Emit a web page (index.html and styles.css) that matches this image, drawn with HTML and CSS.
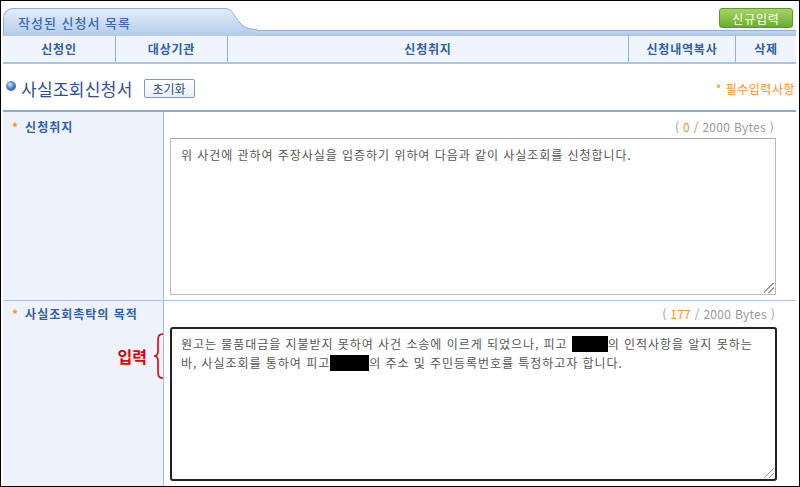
FILE: index.html
```html
<!DOCTYPE html>
<html lang="ko">
<head>
    <meta charset="UTF-8">
    <title>사실조회신청서</title>
    <link rel="stylesheet" href="styles.css">
</head>
<body>
    <div class="frame">
        <!-- 상단 탭 -->
        <div class="topbar">
            <div class="tab">작성된 신청서 목록</div>
            <svg class="tab-curve" width="36" height="28" viewBox="0 0 36 28">
                <defs>
                    <linearGradient id="tabg" x1="0" y1="0" x2="0" y2="1">
                        <stop offset="0" stop-color="#e3edf9"/>
                        <stop offset="1" stop-color="#b3cbea"/>
                    </linearGradient>
                </defs>
                <path d="M0 0.5 H4 C12 0.5 13 9 19 15 C23 19 27 21.5 36 21.5 V28 H0 Z" fill="url(#tabg)"/>
                <path d="M0 0.5 H4 C12 0.5 13 9 19 15 C23 19 27 21.5 36 21.5" fill="none" stroke="#8daedb" stroke-width="1"/>
            </svg>
            <div class="tab-rest">
                <button class="btn-new">신규입력</button>
                <div class="tab-line"></div>
            </div>
        </div>

        <div class="cols">
            <div>신청인</div>
            <div>대상기관</div>
            <div>신청취지</div>
            <div>신청내역복사</div>
            <div>삭제</div>
        </div>

        <!-- 신청서 제목 -->
        <div class="title-row">
            <span class="bullet"></span>
            <h2>사실조회신청서</h2>
            <button class="btn-reset">초기화</button>
            <span class="required">* 필수입력사항</span>
        </div>

        <div class="form">
            <div class="form-row first">
                <div class="label"><span class="star">*</span>신청취지</div>
                <div class="field">
                    <div class="bytes">( <em>0</em> / 2000 Bytes )</div>
                    <div class="textbox">위 사건에 관하여 주장사실을 입증하기 위하여 다음과 같이 사실조회를 신청합니다.</div>
                </div>
            </div>
            <div class="form-row second">
                <div class="label">
                    <div><span class="star">*</span>사실조회촉탁의 목적</div>
                    <div class="note">
                        <span class="note-text">입력</span>
                        <svg class="brace" width="12" height="46" viewBox="0 0 12 46">
                            <path d="M10 1 C5 1 5 4 5 9 V18 C5 21 4 23 1 23 C4 23 5 25 5 28 V37 C5 42 5 45 10 45" fill="none" stroke="#e00000" stroke-width="1.6"/>
                        </svg>
                    </div>
                </div>
                <div class="field">
                    <div class="bytes">( <em>177</em> / 2000 Bytes )</div>
                    <div class="textbox active">원고는 물품대금을 지불받지 못하여 사건 소송에 이르게 되었으나, 피고 <span class="hide w1"></span>의 인적사항을 알지 못하는<br>바, 사실조회를 통하여 피고<span class="hide w2"></span>의 주소 및 주민등록번호를 특정하고자 합니다.</div>
                </div>
            </div>
        </div>
    </div>
</body>
</html>
```

FILE: styles.css
```css
* {
    margin: 0;
    padding: 0;
    box-sizing: border-box;
}

body {
    font-family: "Noto Sans CJK KR", "Noto Sans", sans-serif;
    font-size: 12px;
    color: #555;
    background: #fff;
}

.frame {
    width: 800px;
    height: 487px;
    border: 1px solid #000;
    padding: 0 3px 0 2px;
    display: flex;
    flex-direction: column;
    overflow: hidden;
}

/* 상단 탭 */
.topbar {
    display: flex;
    height: 35px;
    align-items: flex-end;
}

.tab {
    width: 218px;
    height: 28px;
    padding: 0 0 0 14px;
    line-height: 28px;
    color: #3b67b3;
    font-size: 13px;
    font-weight: 500;
    letter-spacing: 1px;
    background: linear-gradient(#e3edf9, #b3cbea);
    border: 1px solid #8daedb;
    border-right: none;
    border-bottom: none;
    border-radius: 10px 0 0 0;
}

.tab-curve {
    display: block;
    flex-shrink: 0;
}

.tab-rest {
    flex: 1;
    height: 35px;
    display: flex;
    flex-direction: column;
    justify-content: space-between;
    align-items: flex-end;
}

.btn-new {
    margin: 7px 3px 0 0;
    width: 74px;
    height: 20px;
    border: 1px solid #5e9a25;
    border-radius: 3px;
    background: linear-gradient(#a4d36a, #6cae2c);
    color: #fff;
    font-family: inherit;
    font-size: 12px;
    letter-spacing: 0.8px;
}

.tab-line {
    width: 100%;
    height: 6px;
    background: linear-gradient(#c7d8ef, #a8c3e6);
    border-top: 1px solid #8daedb;
}

/* 목록 헤더 */
.cols {
    display: grid;
    grid-template-columns: 112px 112px 401px 107px 1fr;
    height: 28px;
    background: #f0f5fd;
    border-bottom: 2px solid #a9c4ea;
}

.cols div {
    text-align: center;
    line-height: 26px;
    color: #2f5ea8;
    font-weight: 700;
    letter-spacing: 0.8px;
    border-left: 1px solid #8eb1e1;
}

.cols div:first-child {
    border-left: none;
}

/* 제목 */
.title-row {
    height: 46px;
    display: flex;
    align-items: center;
    padding: 2px 0 0 3px;
}

.bullet {
    width: 10px;
    height: 10px;
    border-radius: 50%;
    background: radial-gradient(circle at 40% 35%, #cfe0f8 0, #4f7fd0 45%, #2a4f9a 100%);
    margin-right: 5px;
    margin-top: -4px;
}

.title-row h2 {
    font-size: 17px;
    font-weight: 400;
    color: #2c4f96;
    letter-spacing: 0.3px;
}

.btn-reset {
    margin-left: 11px;
    width: 51px;
    height: 19px;
    border: 1px solid #7f9db9;
    border-radius: 2px;
    background: linear-gradient(#fff, #e8eef6);
    color: #2b4f8a;
    font-family: inherit;
    font-size: 12px;
}

.required {
    margin-left: auto;
    margin-right: 1px;
    color: #f7931e;
    letter-spacing: 0.5px;
}

/* 입력 폼 */
.form {
    flex: 1;
    display: flex;
    flex-direction: column;
    border-top: 2px solid #86aade;
}

.form-row {
    display: grid;
    grid-template-columns: 161px 1fr;
}

.form-row.first {
    height: 189px;
    border-bottom: 1px solid #a9c4ea;
}

.form-row.second {
    flex: 1;
}

.label {
    background: #eef3fb;
    border-right: 1px solid #9fbde8;
    padding: 6px 0 0 9px;
    color: #2f5ea8;
    font-weight: 700;
    letter-spacing: 1px;
}

.second .label {
    padding-top: 4px;
}

.star {
    color: #f7931e;
    margin-right: 6px;
}

.note {
    display: flex;
    align-items: center;
    justify-content: flex-end;
    margin-top: 11px;
    padding-right: 0;
}

.note-text {
    color: #e00000;
    font-size: 16px;
    font-weight: 700;
    margin-right: 6px;
    letter-spacing: 0;
}

.brace {
    margin-right: -2px;
}

.field {
    padding: 6px 20px 5px 6px;
    display: flex;
    flex-direction: column;
}

.second .field {
    padding: 4px 19px 5px 6px;
}

.bytes {
    text-align: right;
    color: #999;
    height: 20px;
    letter-spacing: 0.3px;
    padding-right: 2px;
}

.bytes em {
    font-style: normal;
    color: #f7931e;
}

.textbox {
    flex: 1;
    position: relative;
    border: 1px solid #bbb;
    border-top-color: #a8a8a8;
    padding: 6px 10px;
    line-height: 19px;
    letter-spacing: 0.95px;
    color: #555;
}

.second .textbox {
    margin-top: 2px;
}

.textbox.active {
    border: 2px solid #222;
    border-radius: 3px;
    padding: 5px 9px;
}

.textbox::after {
    content: "";
    position: absolute;
    right: 1px;
    bottom: 1px;
    width: 10px;
    height: 10px;
    background: linear-gradient(135deg, transparent 45%, #999 45%, #999 52%, transparent 52%, transparent 70%, #999 70%, #999 77%, transparent 77%);
}

.hide {
    display: inline-block;
    height: 16px;
    background: #000;
    vertical-align: -3px;
}

.hide.w1 {
    width: 36px;
}

.hide.w2 {
    width: 39px;
}
```
